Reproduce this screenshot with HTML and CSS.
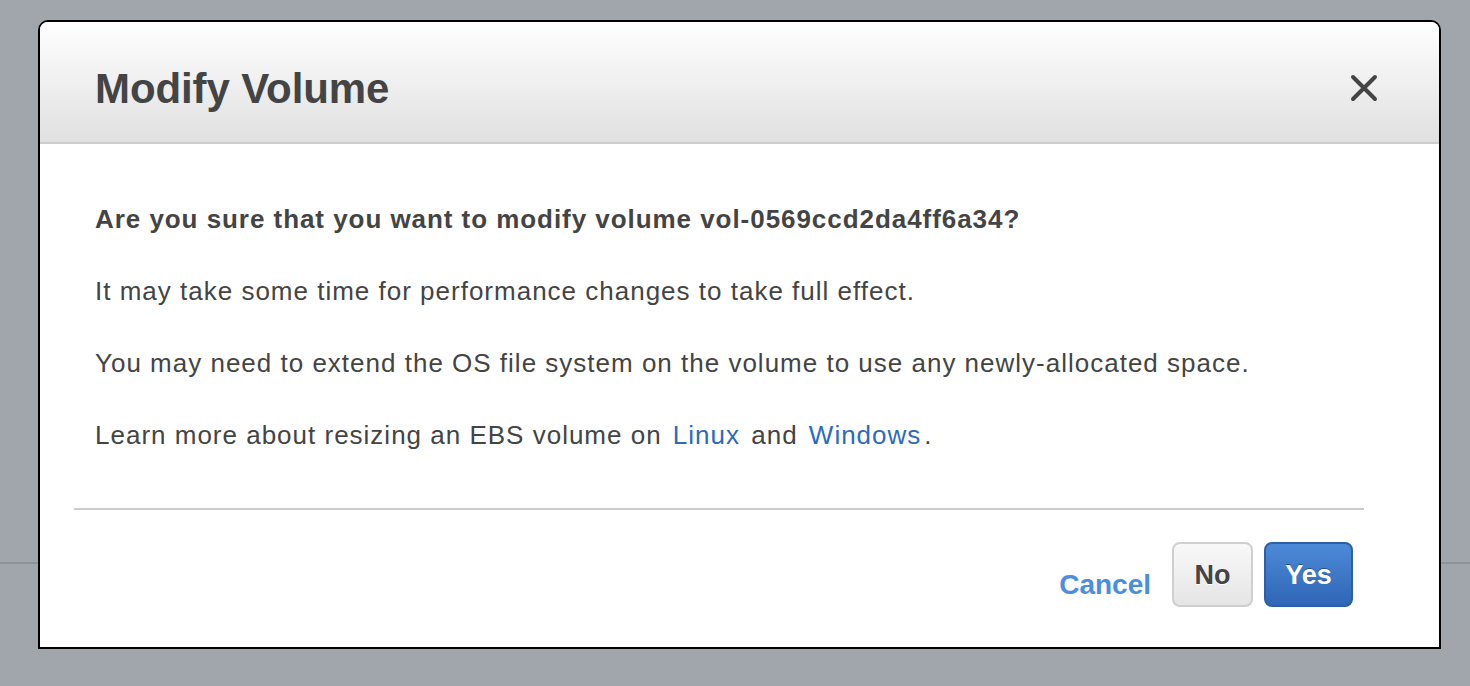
FILE: index.html
```html
<!DOCTYPE html>
<html>
<head>
  <title>Modify Volume</title>
  <link rel="stylesheet" href="styles.css">
</head>
<body>
  <div class="backdrop">
    <div class="backdrop-rule"></div>
  </div>

  <div class="modal" role="dialog">
    <div class="modal-header">
      <h1>Modify Volume</h1>
      <button class="close" aria-label="Close">
        <svg width="28" height="28" viewBox="0 0 28 28">
          <path d="M3 3 L25 25 M25 3 L3 25" stroke="#444" stroke-width="4" stroke-linecap="round" fill="none"/>
        </svg>
      </button>
    </div>

    <div class="modal-body">
      <p class="question">Are you sure that you want to modify volume vol-0569ccd2da4ff6a34?</p>
      <p>It may take some time for performance changes to take full effect.</p>
      <p>You may need to extend the OS file system on the volume to use any newly-allocated space.</p>
      <p>Learn more about resizing an EBS volume on <a href="#">Linux</a> and <a href="#">Windows</a>.</p>
    </div>

    <div class="modal-footer">
      <a class="cancel" href="#">Cancel</a>
      <button class="btn btn-no">No</button>
      <button class="btn btn-yes">Yes</button>
    </div>
  </div>
</body>
</html>
```

FILE: styles.css
```css
body {
  margin: 0;
  height: 686px;
  overflow: hidden;
  background-color: #a1a5ac;
  font-family: "Liberation Sans", Arial, sans-serif;
  color: #444;
}

.backdrop {
  padding-top: 562px;
}

.backdrop-rule {
  height: 2px;
  background-color: #8e9299;
}

.modal {
  position: fixed;
  top: 20px;
  left: 38px;
  width: 1403px;
  height: 629px;
  box-sizing: border-box;
  background-color: #fff;
  border: 2px solid #000;
  border-radius: 10px 10px 0 0;
  overflow: hidden;
}

.modal-header {
  height: 122px;
  box-sizing: border-box;
  padding: 0 61px 0 55px;
  display: flex;
  justify-content: space-between;
  align-items: flex-start;
  background: linear-gradient(to bottom, #ffffff, #e0e0e0);
  border-bottom: 2px solid #cdcdcd;
}

.modal-header h1 {
  margin: 43px 0 0 0;
  font-size: 42px;
  line-height: 48px;
  font-weight: bold;
  letter-spacing: -0.1px;
  color: #444;
}

.close {
  margin-top: 52px;
  padding: 0;
  border: none;
  background: none;
  cursor: pointer;
  line-height: 0;
}

.modal-body {
  padding: 60px 55px 0 55px;
}

.modal-body p {
  margin: 0 0 42px 0;
  font-size: 26px;
  line-height: 30px;
  letter-spacing: 1px;
}

.modal-body p:last-child {
  margin-bottom: 0;
}

.modal-body .question {
  font-weight: bold;
  letter-spacing: 0.95px;
}

.modal-body a {
  color: #2b6bbd;
  text-decoration: none;
  padding: 0 3px;
}

.modal-footer {
  margin: 58px 75px 0 34px;
  padding: 32px 11px 0 0;
  border-top: 2px solid #cbcbcb;
  display: flex;
  justify-content: flex-end;
  align-items: center;
  gap: 11px;
}

.cancel {
  margin: 20px 10px 0 0;
  font-size: 28px;
  font-weight: bold;
  color: #4a8fdc;
  text-decoration: none;
}

.btn {
  height: 65px;
  box-sizing: border-box;
  border-radius: 8px;
  font-family: "Liberation Sans", Arial, sans-serif;
  font-size: 27px;
  font-weight: bold;
  cursor: pointer;
  padding: 2px 0 0 0;
}

.btn-no {
  width: 81px;
  color: #444;
  border: 2px solid #cfcfcf;
  background: linear-gradient(to bottom, #f8f8f8, #e5e5e5);
  text-shadow: 0 1px 0 #fff;
}

.btn-yes {
  width: 89px;
  color: #fff;
  border: 2px solid #2c5fab;
  background: linear-gradient(to bottom, #4c8ad8, #2f66b5);
  text-shadow: 0 -1px 0 rgba(0, 0, 0, 0.35);
}
```
